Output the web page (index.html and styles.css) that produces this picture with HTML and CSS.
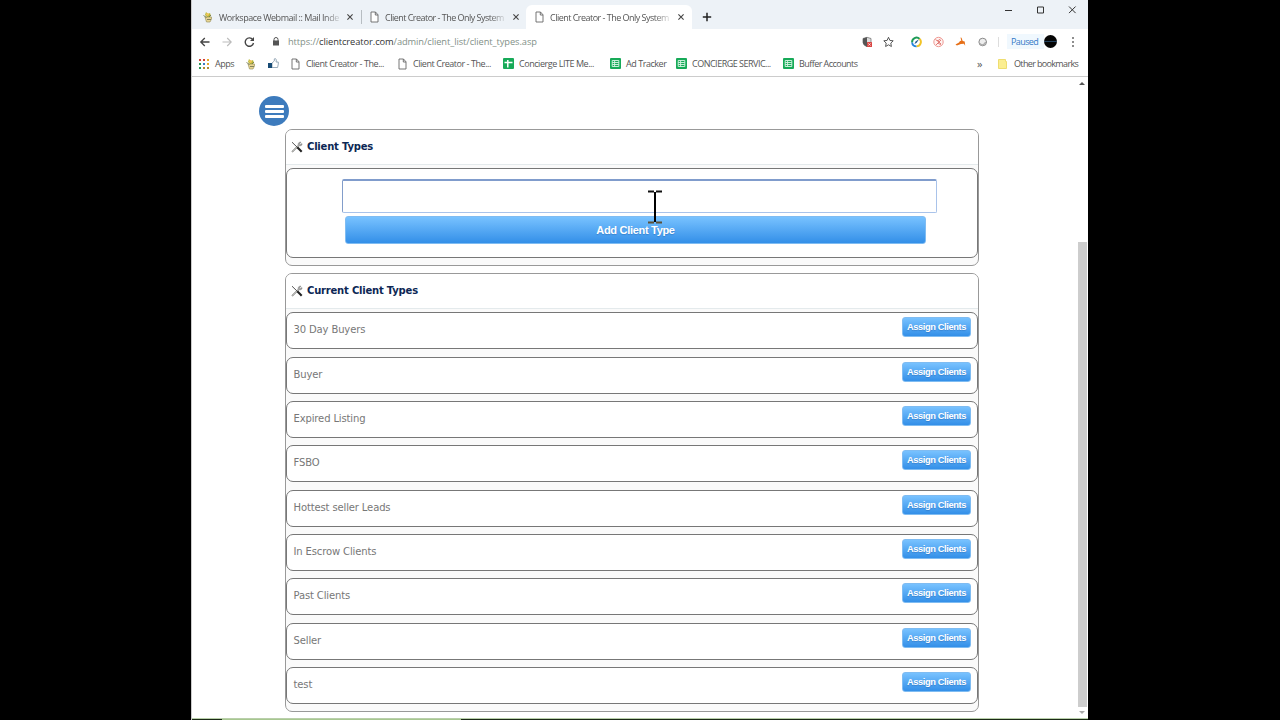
FILE: index.html
```html
<!DOCTYPE html>
<html lang="en">

<head>
    <meta charset="UTF-8">
    <meta name="viewport" content="width=device-width, initial-scale=1.0">
    <title>Client Creator - The Only System</title>
    <link rel="stylesheet" href="styles.css">
</head>

<body>
    <!-- shared icons -->
    <svg class="sprite" aria-hidden="true">
        <symbol id="page" viewBox="0 0 9 12">
            <path d="M1 1h4.5L8 3.8V11H1zM5.3 1v3H8" fill="#fff" stroke="#666" stroke-width=".9" />
        </symbol>
        <symbol id="mail" viewBox="0 0 10 12">
            <path d="M2 4l1-3 2 2 2-1 1 3-3 2z" fill="#b5b936" />
            <circle cx="4.5" cy="3.5" r="1.4" fill="#f2c55c" />
            <path d="M2 6h6.5v2L7 11H3.5z" fill="#e9d694" stroke="#8d8653" stroke-width=".6" />
            <path d="M.5 4.5l3 2M4 8.5h4M6 6l2-2" stroke="#777954" stroke-width=".9" />
        </symbol>
        <symbol id="close" viewBox="0 0 8 8">
            <path d="M1.4 1.4l5.2 5.2M6.6 1.4L1.4 6.6" stroke="#444" stroke-width="1.1" />
        </symbol>
        <symbol id="sheet" viewBox="0 0 11 11">
            <rect width="11" height="11" rx="1" fill="#17aa58" />
            <path d="M2.2 2.5h6.6v6H2.2zM2.2 4.5h6.6M2.2 6.5h6.6M4.6 2.5v6" fill="none" stroke="#d9f5e4" stroke-width=".9" />
        </symbol>
        <symbol id="tools" viewBox="0 0 12 12">
            <path d="M1 11l6.3-6.3" stroke="#777" stroke-width="1.6" />
            <path d="M1.2 10.8l6-6" stroke="#e5e5dc" stroke-width=".6" />
            <path d="M10 1L8 1.4 7 3l.4 1.6 1.7.3L11 4V2.5L9.4 3.6l-.8-.7z" fill="#aaa" stroke="#666" stroke-width=".4" />
            <path d="M1 1.2l5.5 5.3" stroke="#555" stroke-width="1" />
            <path d="M6.3 6.3l4.4 4.4" stroke="#222" stroke-width="2.1" />
        </symbol>
    </svg>

    <div class="window">
        <div class="tab-strip">
            <div class="tab tab-first">
                <svg class="icon-mail"><use href="#mail" /></svg>
                <span class="tab-title">Workspace Webmail :: Mail Inde</span>
                <svg class="icon-close"><use href="#close" /></svg>
            </div>
            <div class="tab tab-second">
                <svg class="icon-page"><use href="#page" /></svg>
                <span class="tab-title">Client Creator - The Only System</span>
                <svg class="icon-close"><use href="#close" /></svg>
            </div>
            <div class="tab tab-active">
                <svg class="icon-page"><use href="#page" /></svg>
                <span class="tab-title">Client Creator - The Only System</span>
                <svg class="icon-close"><use href="#close" /></svg>
            </div>
            <svg class="new-tab" viewBox="0 0 10 10"><path d="M5 .8v8.4M.8 5h8.4" stroke="#222" stroke-width="1.5" /></svg>
            <svg class="window-buttons" viewBox="0 0 74 12">
                <path d="M2 6.5h7" stroke="#333" />
                <path d="M34.5 3h6v6h-6z" fill="none" stroke="#333" />
                <path d="M66 2.5l6.6 6.6M72.6 2.5L66 9.1" stroke="#333" />
            </svg>
        </div>

        <div class="toolbar">
            <svg class="nav-icons" viewBox="0 0 84 14">
                <path d="M10.5 7H2M5.8 3l-4 4 4 4" fill="none" stroke="#444" stroke-width="1.3" />
                <path d="M23.5 7H32M28.2 3l4 4-4 4" fill="none" stroke="#bbb" stroke-width="1.1" />
                <path d="M53.8 4.6A4.2 4.2 0 1 0 54.5 8" fill="none" stroke="#444" stroke-width="1.4" />
                <path d="M55 2v4h-4z" fill="#444" />
                <path d="M75 6V4.5a2 2 0 0 1 4 0V6" fill="none" stroke="#555" />
                <rect x="74" y="5.5" width="6" height="5" fill="#555" />
            </svg>
            <span class="url">https://<b>clientcreator.com</b>/admin/client_list/client_types.asp</span>
            <svg class="extensions" viewBox="0 0 145 14">
                <path d="M5 2.3l4 1.200v4Q9 10 5 11.800 1 10 1 7.500v-4z" fill="#ddd" stroke="#666" stroke-width=".7" />
                <path d="M5 2.300v9.500Q1 10 1 7.500v-4z" fill="#555" />
                <rect x="5" y="7" width="5" height="5" rx=".6" fill="#d94442" />
                <path d="M6.300 8.300l2.300 2.300M8.600 8.300l-2.300 2.300" stroke="#fff" stroke-width=".7" />
                <path d="M26.500 2.300l1.400 3.100 3.300.4-2.400 2.300.6 3.400-2.900-1.700-2.900 1.700.6-3.400-2.400-2.300 3.300-.4z" fill="none" stroke="#444" stroke-width=".9" />
                <g fill="none" stroke-width="1.9">
                    <path d="M50.100 7.500A4.400 4.400 0 0 1 57.600 3.900" stroke="#1e9b57" />
                    <path d="M57.600 3.900A4.400 4.400 0 0 1 54.500 11.400" stroke="#f2c326" />
                    <path d="M54.500 11.400A4.400 4.400 0 0 1 50.100 7.500" stroke="#2684dc" />
                </g>
                <path d="M52.500 9l1-2.500 3.500-2.300-2.300 3.500z" fill="#225a91" />
                <circle cx="76.500" cy="7" r="4.700" fill="#fff2f0" stroke="#ef9a94" />
                <path d="M73.500 4.500l2 1.500 3-2M74 10l2-2 3 2M75 5l4 4M79 5l-4 4" fill="none" stroke="#df726c" stroke-width=".9" />
                <path d="M93.500 9.500l3.500-2 1-1.500 1.300-.3-.8-3.200 1 .2 1.200 3.200 2 .6.500 4.300-1.300-2-3 .3-4 1.500z" fill="#e66f17" />
                <circle cx="120.700" cy="7" r="3.800" fill="#eee" stroke="#888" />
                <path d="M117.700 8.500a3.200 3.200 0 0 0 5.800-1.500" fill="none" stroke="#aaa" stroke-width="1.500" />
                <path d="M136.500 2v10" stroke="#ddd" />
            </svg>
            <span class="paused">Paused</span>
            <span class="avatar"></span>
            <svg class="menu-dots" viewBox="0 0 4 12"><path d="M2 1.200v1.600M2 5.200v1.600M2 9.200v1.600" stroke="#444" stroke-width="1.600" /></svg>
        </div>

        <div class="bookmarks">
            <svg class="apps" viewBox="0 0 10 10">
                <path d="M0 0h2v2H0zM4 0h2v2H4z" fill="#d34034" />
                <path d="M8 0h2v2H8zM8 4h2v2H8z" fill="#e7a62a" />
                <path d="M0 4h2v2H0zM0 8h2v2H0z" fill="#289653" />
                <path d="M4 4h2v2H4z" fill="#397bc8" />
                <path d="M4 8h2v2H4zM8 8h2v2H8z" fill="#b28c35" />
            </svg>
            <span class="bm-apps">Apps</span>
            <svg class="icon-mail bm-mail"><use href="#mail" /></svg>
            <svg class="thumb" viewBox="0 0 11 11">
                <path d="M4 5l2.300-2V.9L7.500.6l.9 1.400-.4 2h2.300v2L9.600 9.500H4z" fill="#fff" stroke="#8297a8" stroke-width=".8" />
                <path d="M0 5h4v5H0z" fill="#174b75" />
            </svg>
            <svg class="icon-page bm-page"><use href="#page" /></svg>
            <span class="bm-client">Client Creator - The...</span>
            <svg class="icon-page bm-page"><use href="#page" /></svg>
            <span class="bm-client">Client Creator - The...</span>
            <svg class="icon-sheet" viewBox="0 0 11 11">
                <rect width="11" height="11" rx="1" fill="#17aa58" />
                <path d="M1.500 4.500h8M4.800 2v7.500" stroke="#fff" stroke-width="1.500" />
            </svg>
            <span class="bm-lite">Concierge LITE Me...</span>
            <svg class="icon-sheet"><use href="#sheet" /></svg>
            <span class="bm-tracker">Ad Tracker</span>
            <svg class="icon-sheet"><use href="#sheet" /></svg>
            <span class="bm-service">CONCIERGE SERVIC...</span>
            <svg class="icon-sheet"><use href="#sheet" /></svg>
            <span class="bm-buffer">Buffer Accounts</span>
            <span class="more">»</span>
            <svg class="folder" viewBox="0 0 9 10"><path d="M.5.500h7v2h1v7h-8z" fill="#fbee91" stroke="#eedd70" /></svg>
            <span class="bm-other">Other bookmarks</span>
        </div>

        <div class="viewport">
            <div class="page">
                <button class="menu-button" aria-label="Menu"><i></i><i></i><i></i></button>

                <section class="panel panel-form">
                    <h2><svg class="icon-tools"><use href="#tools" /></svg>Client Types</h2>
                    <form class="box">
                        <input class="type-input" type="text" aria-label="Client type">
                        <button class="button button-add" type="button">Add Client Type</button>
                    </form>
                </section>

                <section class="panel panel-list">
                    <h2><svg class="icon-tools"><use href="#tools" /></svg>Current Client Types</h2>
                    <ul class="types">
                        <li class="box row"><span>30 Day Buyers</span><button class="button">Assign Clients</button></li>
                        <li class="box row"><span>Buyer</span><button class="button">Assign Clients</button></li>
                        <li class="box row"><span>Expired Listing</span><button class="button">Assign Clients</button></li>
                        <li class="box row"><span>FSBO</span><button class="button">Assign Clients</button></li>
                        <li class="box row"><span>Hottest seller Leads</span><button class="button">Assign Clients</button></li>
                        <li class="box row"><span>In Escrow Clients</span><button class="button">Assign Clients</button></li>
                        <li class="box row"><span>Past Clients</span><button class="button">Assign Clients</button></li>
                        <li class="box row"><span>Seller</span><button class="button">Assign Clients</button></li>
                        <li class="box row"><span>test</span><button class="button">Assign Clients</button></li>
                    </ul>
                </section>
            </div>
            <div class="scrollbar">
                <span class="arrow-up"></span>
                <span class="thumb-bar"></span>
                <span class="arrow-down"></span>
            </div>
        </div>
        <div class="taskbar-edge"></div>
    </div>

    <svg class="cursor" viewBox="0 0 16 34">
        <path d="M1 1.500h6M9 1.500h6" stroke="#111" stroke-width="2" />
        <path d="M8 2v30" stroke="#000" stroke-width="2" />
        <path d="M1 32.500h6M9 32.500h6" stroke="#5b5037" stroke-width="2" />
    </svg>
</body>

</html>
```
FILE: styles.css
```css
* {
    box-sizing: border-box;
}

body {
    margin: 0;
    height: 720px;
    background: #000;
    overflow: hidden;
    font-family: "Open Sans", "Noto Sans", sans-serif;
    font-size: 9px;
    letter-spacing: -0.45px;
    color: #555;
}

svg {
    display: block;
    flex: none;
}

.sprite {
    position: absolute;
    width: 0;
    height: 0;
}

.window {
    width: 897px;
    height: 720px;
    margin-left: 191px;
    background: #fff;
    display: flex;
    flex-direction: column;
    border-left: 1px solid #ccc;
    white-space: nowrap;
}

/* browser chrome */
.tab-strip {
    height: 29px;
    background: #edf2f7;
    display: flex;
    flex: none;
}

.tab {
    height: 24px;
    margin-top: 5px;
    display: flex;
    align-items: center;
}

.tab-first {
    width: 169px;
    padding-left: 11px;
}

.tab-second {
    width: 165px;
    padding-left: 9px;
    position: relative;
}

.tab-second::before {
    content: "";
    position: absolute;
    left: 0;
    top: 5px;
    height: 14px;
    border-left: 1px solid #b7bdc2;
}

.tab-active {
    width: 166px;
    padding-left: 9px;
    background: #fff;
    border-radius: 6px 6px 0 0;
}

.tab-title {
    width: 120px;
    margin: 0 7px 0 6px;
    letter-spacing: -0.52px;
    -webkit-mask-image: linear-gradient(to right, #000 87%, rgba(0, 0, 0, .15));
    mask-image: linear-gradient(to right, #000 87%, rgba(0, 0, 0, .15));
}

.tab-first .tab-title {
    width: 121px;
    margin-right: 6px;
    letter-spacing: -0.45px;
}

.icon-page {
    width: 9px;
    height: 12px;
}

.icon-mail {
    width: 10px;
    height: 12px;
}

.icon-close {
    width: 8px;
    height: 8px;
}

.new-tab {
    width: 10px;
    height: 10px;
    margin: 12px 0 0 10px;
}

.window-buttons {
    width: 74px;
    height: 12px;
    margin: 4px 11px 0 auto;
}

.toolbar {
    height: 25px;
    display: flex;
    align-items: center;
    flex: none;
    padding-left: 7px;
}

.nav-icons {
    width: 84px;
    height: 14px;
}

.url {
    width: 569px;
    margin-left: 5px;
    font-size: 9.3px;
    letter-spacing: -0.08px;
    color: #829088;
}

.url b {
    font-weight: normal;
    color: #333;
}

.extensions {
    width: 145px;
    height: 14px;
    margin-left: 5px;
}

.paused {
    width: 37px;
    height: 15px;
    line-height: 15px;
    padding-left: 4px;
    background: #f0f8fe;
    color: #3479c7;
    letter-spacing: -0.6px;
}

.avatar {
    width: 13px;
    height: 13px;
    border-radius: 50%;
    background: linear-gradient(#050505 42%, #24435f 46%, #24435f 53%, #050505 57%);
}

.menu-dots {
    width: 4px;
    height: 12px;
    margin-left: 14px;
}

.bookmarks {
    height: 23px;
    display: flex;
    align-items: center;
    flex: none;
    padding: 0 0 3px 7px;
    border-bottom: 1px solid #ccc;
}

.apps {
    width: 10px;
    height: 10px;
    margin-right: 6px;
}

.bm-apps {
    width: 31px;
}

.bm-mail {
    margin-right: 12px;
}

.thumb {
    width: 11px;
    height: 11px;
    margin-right: 12px;
}

.bm-page {
    margin-right: 6px;
}

.bm-client {
    width: 92px;
}

.bm-client + .icon-sheet {
    margin-left: -2px;
}

.icon-sheet {
    width: 11px;
    height: 11px;
    margin-right: 5px;
}

.bm-lite {
    width: 91px;
}

.bm-tracker {
    width: 50px;
}

.bm-service {
    width: 91px;
    letter-spacing: -0.5px;
}

.bm-buffer {
    letter-spacing: -0.55px;
}

.more {
    width: 21px;
    margin-left: auto;
    font-size: 11px;
}

.folder {
    width: 9px;
    height: 10px;
}

.bm-other {
    width: 74px;
    margin-left: 7px;
    letter-spacing: -0.65px;
}

/* page content */
.viewport {
    flex: 1;
    display: flex;
    min-height: 0;
}

.page {
    width: 885px;
    padding: 19px 0 0 93px;
    overflow: hidden;
}

.menu-button {
    width: 30px;
    height: 30px;
    margin: 0 0 3px -26px;
    padding: 0;
    border: 0;
    border-radius: 50%;
    background: #3d7bbd;
    display: flex;
    flex-direction: column;
    align-items: center;
    justify-content: center;
    gap: 2px;
}

.menu-button i {
    width: 19px;
    height: 3px;
    border-radius: 1px;
    background: #fff;
}

.panel {
    width: 694px;
    border: 1px solid #999;
    border-radius: 7px;
    background: #fafafa;
    font-family: "DejaVu Sans", Verdana, sans-serif;
    letter-spacing: -0.13px;
}

.panel-form {
    height: 137px;
    margin-bottom: 7px;
}

.panel-list {
    height: 439px;
}

.panel h2 {
    height: 35px;
    margin: 0 0 3px;
    padding-left: 5px;
    border-bottom: 1px solid #e4eaec;
    border-radius: 6px 6px 0 0;
    background: #fff;
    color: #0c2754;
    font-size: 10px;
    letter-spacing: -0.2px;
    line-height: 33px;
    display: flex;
}

.icon-tools {
    width: 12px;
    height: 12px;
    margin: 11px 4px 0 0;
}

.box {
    background: #fff;
    border: 1px solid #777;
    border-radius: 7px;
}

form.box {
    height: 90px;
    padding: 10px 0 0 55px;
}

.type-input {
    display: block;
    width: 595px;
    height: 34px;
    border: 1px solid #a9c3ea;
    border-top: 2px solid #809ccc;
    border-left-color: #829dca;
    border-radius: 2px;
    outline: none;
    background: #fff;
}

.button {
    width: 69px;
    height: 20px;
    padding: 0;
    border: 1px solid #7fbcf2;
    border-radius: 3px;
    background: linear-gradient(#78c2ff, #338fe8);
    color: #fff;
    font: bold 9.3px "Liberation Sans", Arial, sans-serif;
    letter-spacing: -0.4px;
    text-shadow: 0 1px 1px rgba(0, 50, 120, .25);
}

.button-add {
    display: block;
    width: 581px;
    height: 28px;
    margin: 3px 0 0 3px;
    font-size: 11px;
    letter-spacing: -0.3px;
}

.panel .types {
    list-style: none;
    margin: 0;
    padding: 0.300px 0 0;
    display: grid;
    gap: 7.350px;
}

.row {
    height: 37px;
    padding: 4px 6px 0 6.500px;
    display: flex;
    justify-content: space-between;
    color: #777;
    font-size: 10px;
}

.row span {
    line-height: 26px;
}

.scrollbar {
    width: 10px;
    display: flex;
    flex-direction: column;
    align-items: center;
    padding: 5px 0 0;
}

.arrow-up {
    border: 3px solid transparent;
    border-top: 0;
    border-bottom-color: #555;
}

.thumb-bar {
    width: 9px;
    height: 465px;
    margin-top: 157px;
    background: #cdcdcd;
}

.arrow-down {
    margin-top: 4px;
    border: 3px solid transparent;
    border-bottom: 0;
    border-top-color: #aaa;
}

.taskbar-edge {
    height: 2px;
    flex: none;
    border-top: 1px solid #b9cfab;
    background: linear-gradient(to right, #1b2a16 30px, #a7c78f 30px, #a7c78f 269px, #1b2a16 269px);
}

.cursor {
    position: absolute;
    left: 647px;
    top: 190px;
    width: 16px;
    height: 34px;
}
```
